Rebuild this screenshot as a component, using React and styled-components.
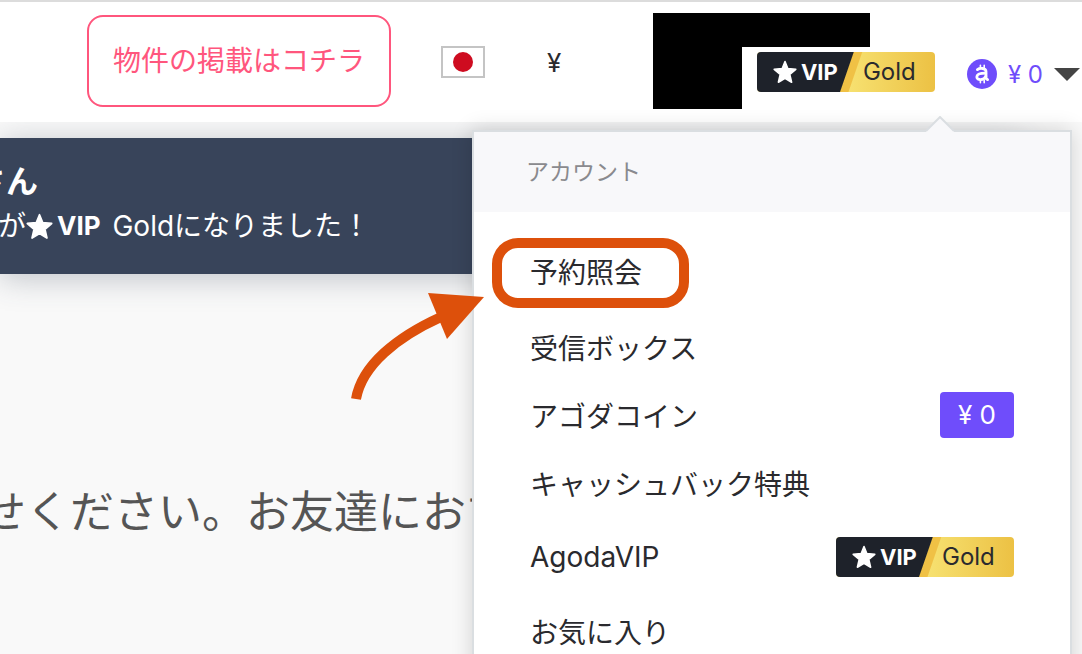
import React from "react";
import styled, { createGlobalStyle } from "styled-components";

const menuItems = [
  { label: "予約照会", marked: true, tall: true },
  { label: "受信ボックス" },
  { label: "アゴダコイン", badge: "coin" },
  { label: "キャッシュバック特典" },
  { label: "AgodaVIP", badge: "vip", tall: true },
  { label: "お気に入り" },
];

function Star({ size }) {
  return (
    <svg width={size} height={size} viewBox="0 0 24 24" aria-hidden="true">
      <path
        d="M12 1.6 14.8 8.6 22.8 9.3 16.8 14.4 18.6 22.2 12 18.2 5.4 22.2 7.2 14.4 1.2 9.3 9.2 8.6Z"
        fill="currentColor"
        stroke="currentColor"
        strokeWidth="1.6"
        strokeLinejoin="round"
      />
    </svg>
  );
}

function VipBadge() {
  return (
    <Vip>
      <VipDark>
        <Star size={24} />
        <b>VIP</b>
      </VipDark>
      <VipGold>Gold</VipGold>
    </Vip>
  );
}

function CoinIcon() {
  return (
    <svg width="30" height="30" viewBox="0 0 30 30" aria-hidden="true">
      <circle cx="15" cy="15" r="15" fill="#6f4dfb" />
      <g
        fill="none"
        stroke="#fff"
        strokeWidth="2.8"
        strokeLinecap="round"
        strokeLinejoin="round"
      >
        <path d="M10.4 10.6C12.5 9 19 8.6 19 12.6V19.4L20.6 20.6" />
        <path d="M18.8 14.2C13 14.2 9.8 15.2 9.8 18 9.8 21.6 17 21.4 18.8 17.4" />
        <path d="M13.4 8.6V6.2M17.2 8.6V6.2M13.4 23.8V21.4M17.2 23.8V21.4" strokeWidth="1.6" />
      </g>
    </svg>
  );
}

function App() {
  return (
    <Page>
      <GlobalStyle />
      <Header>
        <ListButton type="button">物件の掲載はコチラ</ListButton>
        <FlagButton type="button" aria-label="日本語">
          <svg width="44" height="32" viewBox="0 0 44 32" aria-hidden="true">
            <rect x="1" y="1" width="42" height="30" fill="#fff" stroke="#c4c4c4" strokeWidth="2" />
            <circle cx="22" cy="16" r="10" fill="#ce0c20" />
          </svg>
        </FlagButton>
        <Currency type="button">¥</Currency>
        <Account>
          <svg width="217" height="96" viewBox="0 0 217 96" aria-hidden="true">
            <path d="M0 0H217V34H89V96H0Z" />
          </svg>
          <AccountVip>
            <VipBadge />
          </AccountVip>
        </Account>
        <Balance type="button">
          <CoinIcon />
          <span>¥ 0</span>
          <svg width="26" height="13" viewBox="0 0 26 13" aria-hidden="true">
            <path d="M0 0H26L13 13Z" fill="#444" />
          </svg>
        </Balance>

        <Menu>
          <MenuPointer width="30" height="16" viewBox="0 0 30 16" aria-hidden="true">
            <path d="M1 15 15 1 29 15V16H1Z" fill="#f8f8fa" />
            <path d="M1 15 15 1 29 15" fill="none" stroke="#dadee1" strokeWidth="2" />
          </MenuPointer>
          <MenuHeading>アカウント</MenuHeading>
          <MenuList>
            {menuItems.map((item) => (
              <li key={item.label}>
                <MenuLink href="#" $tall={item.tall}>
                  {item.marked ? <Marked>{item.label}</Marked> : item.label}
                  {item.badge === "coin" && <CoinBadge>¥ 0</CoinBadge>}
                  {item.badge === "vip" && <VipBadge />}
                </MenuLink>
              </li>
            ))}
          </MenuList>
        </Menu>
      </Header>

      <Banner>
        <h2>さん</h2>
        <p>
          が<Star size={27} />
          <b>VIP</b> Goldになりました！
        </p>
      </Banner>
      <Message>せください。お友達におす</Message>

      <Arrow width="136" height="112" viewBox="0 0 136 112" aria-hidden="true">
        <path d="M7 108C13 74 48 46 92 26" fill="none" stroke="#dd500b" strokeWidth="10" />
        <path d="M79 2 135 6 98 48Z" fill="#dd500b" />
      </Arrow>
    </Page>
  );
}

const GlobalStyle = createGlobalStyle`
  * {
    box-sizing: border-box;
  }

  body {
    margin: 0;
    background-color: #f9f9f9;
    font-family: Inter, "Noto Sans CJK JP", sans-serif;
    color: #2a2a2e;
  }

  button {
    padding: 0;
    border: none;
    background: none;
    font-family: inherit;
    cursor: pointer;
  }
`;

const Page = styled.div`
  position: relative;
  height: 100vh;
  overflow: hidden;
`;

const Header = styled.header`
  position: relative;
  z-index: 1;
  display: flex;
  align-items: center;
  height: 122px;
  padding-left: 87px;
  border-top: 2px solid #dcdcdc;
  background-color: #fff;
`;

const ListButton = styled.button`
  height: 92px;
  margin-bottom: 2px;
  padding: 0 24px 4px;
  border: 2px solid #ff567d;
  border-radius: 16px;
  color: #ff567d;
  font-size: 28px;
  white-space: nowrap;
`;

const FlagButton = styled.button`
  display: flex;
  margin-left: 50px;
`;

const Currency = styled.button`
  margin-left: 62px;
  color: #2a2a2e;
  font-size: 26px;
`;

const Account = styled.div`
  display: flex;
  align-self: flex-start;
  margin-left: auto;
  padding-top: 11px;
`;

const AccountVip = styled.div`
  margin: 39px 0 0 -113px;
`;

const Balance = styled.button`
  display: flex;
  align-items: center;
  gap: 11px;
  margin: 24px 2px 0 32px;
  color: #6f4dfb;
  font-size: 24px;
`;

const Vip = styled.span`
  display: flex;
  width: 178px;
  height: 40px;
  overflow: hidden;
  border-radius: 4px;
  line-height: 40px;
  background: linear-gradient(90deg, #f7e272 50%, #ecc144);
`;

const VipDark = styled.span`
  display: flex;
  align-items: center;
  gap: 4px;
  width: 106px;
  padding-left: 16px;
  color: #fff;
  font-size: 22px;
  background: linear-gradient(
    109deg,
    #1e222a 91px,
    #f0c145 92px,
    #f0c145 99px,
    transparent 100px
  );
`;

const VipGold = styled.span`
  color: #2a2a2e;
  font-size: 24px;
`;

const Menu = styled.nav`
  position: absolute;
  top: 128px;
  right: 10px;
  width: 600px;
  height: 560px;
  border: 2px solid #dadee1;
  background-color: #fff;
  box-shadow: 0 0 20px rgba(0, 0, 0, 0.16);
`;

const MenuPointer = styled.svg`
  position: absolute;
  top: -16px;
  right: 115px;
`;

const MenuHeading = styled.h3`
  margin: 0;
  padding-left: 52px;
  background-color: #f8f8fa;
  color: #8a8a8e;
  font-size: 23px;
  font-weight: 400;
  line-height: 80px;
`;

const MenuList = styled.ul`
  margin: 0;
  padding: 21px 56px 0;
  list-style: none;
`;

const MenuLink = styled.a`
  display: flex;
  align-items: center;
  justify-content: space-between;
  height: ${(props) => (props.$tall ? "80px" : "68px")};
  color: #2a2a2e;
  font-size: 28px;
  text-decoration: none;
`;

const Marked = styled.span`
  margin-left: -38px;
  padding: 0 37px 0 28px;
  border: 10px solid #dd500b;
  border-radius: 26px;
  line-height: 50px;
`;

const CoinBadge = styled.span`
  padding: 0 18px;
  border-radius: 4px;
  background-color: #6f4dfb;
  color: #fff;
  font-size: 26px;
  line-height: 46px;
`;

const Banner = styled.section`
  height: 136px;
  margin: 16px 60px 0 0;
  padding-top: 22px;
  background-color: #38445a;
  box-shadow: 0 4px 30px rgba(56, 68, 90, 0.3);
  color: #fff;
  white-space: nowrap;

  & h2 {
    margin: 0 0 0 -26px;
    font-size: 32px;
    line-height: 44px;
  }

  & p {
    display: flex;
    align-items: center;
    margin: 0 0 0 -2px;
    font-size: 28px;
    line-height: 44px;
    white-space: pre;
  }

  & b {
    margin: 0 4px;
    font-size: 26px;
  }
`;

const Message = styled.p`
  margin: 205px 0 0 -18px;
  color: #555;
  font-size: 44px;
  line-height: 66px;
  white-space: nowrap;
`;

const Arrow = styled.svg`
  position: absolute;
  z-index: 2;
  top: 291px;
  left: 349px;
`;

export default App;
